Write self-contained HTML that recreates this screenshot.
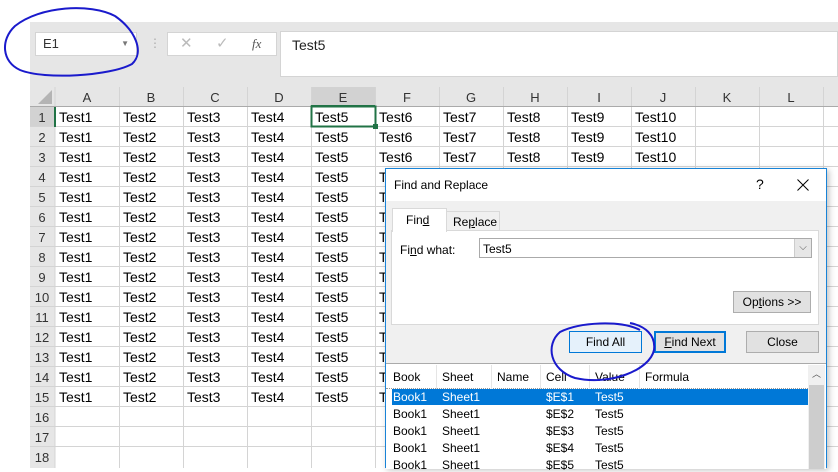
<!DOCTYPE html>
<html><head><style>
*{margin:0;padding:0;box-sizing:border-box}
body{width:838px;height:468px;overflow:hidden;background:#fff;font-family:"Liberation Sans",sans-serif;position:relative}
.a{position:absolute}
.cell{position:absolute;font-size:14px;color:#000;line-height:20px;padding-left:3px;white-space:nowrap}
.d{font-size:12px;color:#000}
.btn{position:absolute;background:#e1e1e1;border:1px solid #adadad;font-size:12px;text-align:center;line-height:20px}
</style></head><body>
<div class="a" style="left:30px;top:22px;width:808px;height:65px;background:#e6e6e6"></div>
<div class="a" style="left:35px;top:32px;width:102px;height:24px;background:#fff;border:1px solid #d4d4d4;font-size:13px;line-height:22px;padding-left:7px;color:#333">E1<span style="position:absolute;right:7px;top:0;font-size:8px;color:#777">▼</span></div>
<div class="a" style="left:149px;top:36px;color:#aaa;font-size:12px">⋮</div>
<div class="a" style="left:167px;top:32px;width:110px;height:24px;background:#fff;border:1px solid #d4d4d4;font-size:15px;line-height:22px;color:#bbb"><span style="position:absolute;left:12px">✕</span><span style="position:absolute;left:48px">✓</span><span style="position:absolute;left:84px;color:#555;font-family:'Liberation Serif',serif;font-style:italic;font-size:13px">fx</span></div>
<div class="a" style="left:280px;top:31px;width:558px;height:46px;background:#fff;border:1px solid #d4d4d4;font-size:14px;padding:5px 0 0 11px;color:#222">Test5</div>
<svg class="a" style="left:0;top:0" width="838" height="468">
<rect x="30" y="87" width="808" height="20" fill="#e6e6e6"/>
<rect x="30" y="107" width="25" height="361" fill="#e6e6e6"/>
<rect x="311" y="87" width="64" height="20" fill="#d2d2d2"/>
<rect x="30" y="107" width="25" height="20" fill="#d2d2d2"/>
<polygon points="52,90 52,104 38,104" fill="#b4b4b4"/>
<g stroke="#d4d4d4" stroke-width="1">
<line x1="55" y1="87" x2="55" y2="468"/>
<line x1="119.5" y1="87" x2="119.5" y2="468"/><line x1="183.5" y1="87" x2="183.5" y2="468"/><line x1="247.5" y1="87" x2="247.5" y2="468"/><line x1="311.5" y1="87" x2="311.5" y2="468"/><line x1="375.5" y1="87" x2="375.5" y2="468"/><line x1="439.5" y1="87" x2="439.5" y2="468"/><line x1="503.5" y1="87" x2="503.5" y2="468"/><line x1="567.5" y1="87" x2="567.5" y2="468"/><line x1="631.5" y1="87" x2="631.5" y2="468"/><line x1="695.5" y1="87" x2="695.5" y2="468"/><line x1="759.5" y1="87" x2="759.5" y2="468"/><line x1="823.5" y1="87" x2="823.5" y2="468"/>
<line x1="30" y1="106.5" x2="838" y2="106.5" stroke="#aaa"/>
<line x1="30" y1="126.5" x2="838" y2="126.5"/><line x1="30" y1="146.5" x2="838" y2="146.5"/><line x1="30" y1="166.5" x2="838" y2="166.5"/><line x1="30" y1="186.5" x2="838" y2="186.5"/><line x1="30" y1="206.5" x2="838" y2="206.5"/><line x1="30" y1="226.5" x2="838" y2="226.5"/><line x1="30" y1="246.5" x2="838" y2="246.5"/><line x1="30" y1="266.5" x2="838" y2="266.5"/><line x1="30" y1="286.5" x2="838" y2="286.5"/><line x1="30" y1="306.5" x2="838" y2="306.5"/><line x1="30" y1="326.5" x2="838" y2="326.5"/><line x1="30" y1="346.5" x2="838" y2="346.5"/><line x1="30" y1="366.5" x2="838" y2="366.5"/><line x1="30" y1="386.5" x2="838" y2="386.5"/><line x1="30" y1="406.5" x2="838" y2="406.5"/><line x1="30" y1="426.5" x2="838" y2="426.5"/><line x1="30" y1="446.5" x2="838" y2="446.5"/>
</g>
<rect x="311.5" y="106.5" width="64" height="20" fill="none" stroke="#217346" stroke-width="2"/>
<rect x="373" y="124" width="5" height="5" fill="#217346"/>
<line x1="55" y1="107" x2="55" y2="127" stroke="#217346" stroke-width="2"/>
<line x1="311" y1="106" x2="375" y2="106" stroke="#217346" stroke-width="2"/>
<g font-family="Liberation Sans" font-size="13" fill="#333" text-anchor="middle">
<text x="87" y="102">A</text><text x="151" y="102">B</text><text x="215" y="102">C</text><text x="279" y="102">D</text><text x="343" y="102">E</text><text x="407" y="102">F</text><text x="471" y="102">G</text><text x="535" y="102">H</text><text x="599" y="102">I</text><text x="663" y="102">J</text><text x="727" y="102">K</text><text x="791" y="102">L</text>
</g>
<g font-family="Liberation Sans" font-size="13" fill="#333" text-anchor="middle">
<text x="42" y="122">1</text><text x="42" y="142">2</text><text x="42" y="162">3</text><text x="42" y="182">4</text><text x="42" y="202">5</text><text x="42" y="222">6</text><text x="42" y="242">7</text><text x="42" y="262">8</text><text x="42" y="282">9</text><text x="42" y="302">10</text><text x="42" y="322">11</text><text x="42" y="342">12</text><text x="42" y="362">13</text><text x="42" y="382">14</text><text x="42" y="402">15</text><text x="42" y="422">16</text><text x="42" y="442">17</text><text x="42" y="462">18</text>
</g>
</svg>
<div id="cells"></div>
<script>
var h='';
for(var r=0;r<15;r++){var y=107+r*20;var n=r<3?10:5;
for(var c=0;c<n;c++){h+='<div class="cell" style="left:'+(56+c*64)+'px;top:'+y+'px">Test'+(c+1)+'</div>';}
if(r>=3)h+='<div class="cell" style="left:376px;top:'+y+'px">T</div>';}
document.getElementById('cells').innerHTML=h;
</script>
<div class="a" style="left:385px;top:168px;width:442px;height:300px;background:#f0f0f0;border:1px solid #1883d7;box-shadow:2px 2px 6px rgba(0,0,0,.25)">
<div class="a" style="left:0;top:0;width:440px;height:32px;background:#fff"></div>
<div class="a d" style="left:8px;top:9px">Find and Replace</div>
<div class="a" style="left:370px;top:7px;font-size:14px">?</div>
<svg class="a" style="left:411px;top:10px" width="12" height="12"><path d="M0.5,0.5 L11.5,11.5 M11.5,0.5 L0.5,11.5" stroke="#000" stroke-width="1"/></svg>
<div class="a" style="left:60px;top:42px;width:54px;height:20px;background:#f0f0f0;border:1px solid #d9d9d9;border-bottom:none"></div>
<div class="a" style="left:6px;top:39px;width:55px;height:24px;background:#fff;border:1px solid #d9d9d9;border-bottom:none;z-index:2"></div>
<div class="a d" style="left:20px;top:44px;z-index:3">Fin<u>d</u></div>
<div class="a d" style="left:67px;top:46px">Re<u>p</u>lace</div>
<div class="a" style="left:5px;top:61px;width:428px;height:95px;background:#fff;border:1px solid #d9d9d9"></div>
<div class="a d" style="left:14px;top:74px">Fi<u>n</u>d what:</div>
<div class="a d" style="left:93px;top:69px;width:333px;height:20px;background:#fff;border:1px solid #aaa;padding:3px 0 0 3px">Test5<div class="a" style="right:0;top:0;width:17px;height:18px;background:#e6e6e6;border-left:1px solid #ccc;font-size:10px;text-align:center;line-height:18px;color:#555">⌵</div></div>
<div class="btn" style="left:347px;top:122px;width:78px;height:22px">Op<u>t</u>ions &gt;&gt;</div>
<div class="btn" style="left:183px;top:162px;width:73px;height:22px;background:#e5f1fb;border-color:#0078d7">Find All</div>
<div class="btn" style="left:268px;top:162px;width:72px;height:22px;border:2px solid #0078d7;line-height:18px"><u>F</u>ind Next</div>
<div class="btn" style="left:360px;top:162px;width:73px;height:22px">Close</div>
<div class="a" style="left:0;top:194px;width:440px;height:106px;background:#fff;border-top:1px solid #aaa"></div>
<div class="a" style="left:422px;top:196px;width:17px;height:104px;background:#f0f0f0"><div style="text-align:center;font-size:9px;color:#555;margin-top:2px">︿</div><div style="position:absolute;left:1px;top:20px;width:15px;height:84px;background:#cdcdcd"></div></div>
<div class="a d" style="left:0;top:196px;width:422px;height:24px;border-bottom:1px dotted #999">
<span class="a" style="left:7px;top:5px">Book</span><span class="a" style="left:56px;top:5px">Sheet</span><span class="a" style="left:111px;top:5px">Name</span><span class="a" style="left:160px;top:5px">Cell</span><span class="a" style="left:209px;top:5px">Value</span><span class="a" style="left:259px;top:5px">Formula</span>
<span class="a" style="left:50px;top:0;height:24px;border-left:1px solid #e5e5e5"></span><span class="a" style="left:105px;top:0;height:24px;border-left:1px solid #e5e5e5"></span><span class="a" style="left:154px;top:0;height:24px;border-left:1px solid #e5e5e5"></span><span class="a" style="left:203px;top:0;height:24px;border-left:1px solid #e5e5e5"></span><span class="a" style="left:253px;top:0;height:24px;border-left:1px solid #e5e5e5"></span>
</div>
<div class="a" style="left:6px;top:220px;width:416px;height:16px;background:#0078d7"></div>
<div id="res"></div>
</div>
<script>
var s='';for(var i=0;i<5;i++){var y=221+i*17;var col=i==0?'#fff':'#000';
s+='<div class="a d" style="left:7px;top:'+y+'px;color:'+col+'">Book1</div><div class="a d" style="left:56px;top:'+y+'px;color:'+col+'">Sheet1</div><div class="a d" style="left:160px;top:'+y+'px;color:'+col+'">$E$'+(i+1)+'</div><div class="a d" style="left:209px;top:'+y+'px;color:'+col+'">Test5</div>';}
document.getElementById('res').innerHTML=s;
</script>
<svg class="a" style="left:0;top:0;pointer-events:none" width="838" height="468">
<path d="M115,16 C90,3 40,6 15,26 C0,40 2,62 20,70 C45,80 110,76 132,64 C145,52 135,30 115,16" fill="none" stroke="#1a1acc" stroke-width="2"/>
<path d="M640,330 C620,320 580,322 560,332 C545,345 550,370 575,378 C610,386 650,370 654,350 C656,335 645,326 630,323" fill="none" stroke="#1a1acc" stroke-width="2"/>
</svg>
</body></html>
